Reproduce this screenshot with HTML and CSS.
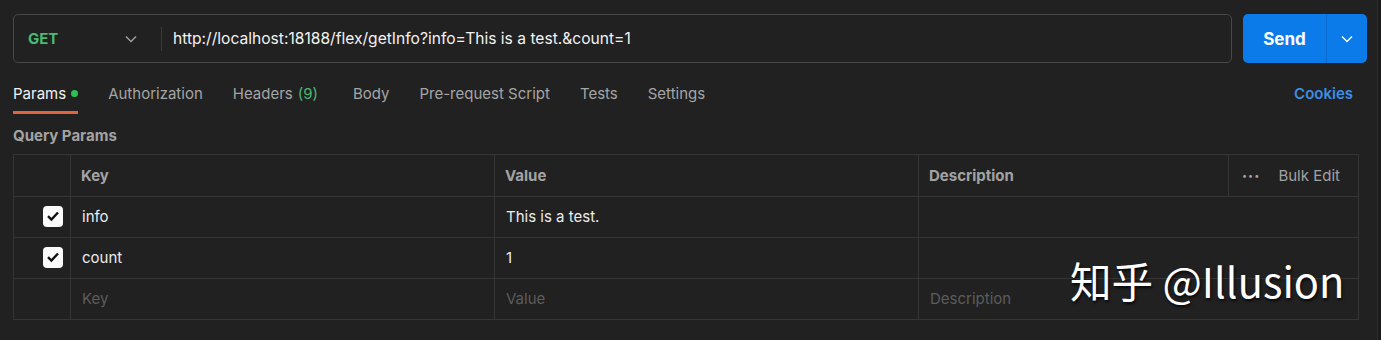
FILE: index.html
```html
<!DOCTYPE html>
<html lang="en">
  <head>
    <meta charset="UTF-8" />
    <meta name="viewport" content="width=device-width, initial-scale=1.0" />
    <title>Params</title>
    <link rel="stylesheet" href="styles.css">
  </head>
  <body>
    <div class="app">
      <!-- Request bar -->
      <div class="request-bar">
        <div class="url-box">
          <div class="method">
            <span class="method-name">GET</span>
            <svg class="chevron" width="12" height="8" viewBox="0 0 12 8">
              <path d="M1 1.5l5 5 5-5" fill="none" stroke="#a0a0a0" stroke-width="1.4" />
            </svg>
          </div>
          <span class="url">http://localhost:18188/flex/getInfo?info=This is a test.&amp;count=1</span>
        </div>
        <div class="send">
          <span class="send-label">Send</span>
          <span class="send-more">
            <svg width="12" height="8" viewBox="0 0 12 8">
              <path d="M1 1.5l5 5 5-5" fill="none" stroke="#fff" stroke-width="1.4" />
            </svg>
          </span>
        </div>
      </div>

      <!-- Tabs -->
      <div class="tabs">
        <ul class="tab-list">
          <li class="tab active">Params <span class="dot"></span></li>
          <li class="tab">Authorization</li>
          <li class="tab">Headers <span class="count">(9)</span></li>
          <li class="tab">Body</li>
          <li class="tab">Pre-request Script</li>
          <li class="tab">Tests</li>
          <li class="tab">Settings</li>
        </ul>
        <span class="cookies">Cookies</span>
      </div>

      <div class="section-title">Query Params</div>

      <table class="params">
        <colgroup>
          <col class="c-check" />
          <col class="c-key" />
          <col class="c-value" />
          <col class="c-desc" />
          <col class="c-bulk" />
        </colgroup>
        <thead>
          <tr>
            <th></th>
            <th>Key</th>
            <th>Value</th>
            <th>Description</th>
            <th class="bulk">
              <span class="more">&bull;&bull;&bull;</span>
              <span>Bulk Edit</span>
            </th>
          </tr>
        </thead>
        <tbody>
          <tr>
            <td class="check-cell"><span class="checkbox"><svg width="14" height="12" viewBox="0 0 14 12"><path d="M2 6.2l3.4 3.3L12 2.5" fill="none" stroke="#111" stroke-width="2.4" /></svg></span></td>
            <td>info</td>
            <td>This is a test.</td>
            <td colspan="2"></td>
          </tr>
          <tr>
            <td class="check-cell"><span class="checkbox"><svg width="14" height="12" viewBox="0 0 14 12"><path d="M2 6.2l3.4 3.3L12 2.5" fill="none" stroke="#111" stroke-width="2.4" /></svg></span></td>
            <td>count</td>
            <td>1</td>
            <td colspan="2"></td>
          </tr>
          <tr class="placeholder">
            <td></td>
            <td>Key</td>
            <td>Value</td>
            <td colspan="2">Description</td>
          </tr>
        </tbody>
      </table>

      <div class="watermark">知乎 @Illusion</div>
    </div>
  </body>
</html>
```

FILE: styles.css
```css
/* Resets */
body {
  margin: 0;
  background: #1b1b1b;
  font-family: Inter, "Noto Sans", sans-serif;
  font-size: 15px;
  color: #ececec;
}
ul {
  margin: 0;
  padding-left: 0;
  list-style: none;
}

/* App */
.app {
  position: relative;
  width: 1378px;
  height: 340px;
  box-sizing: border-box;
  padding: 14px 10px 0 13px;
  background: #212121;
  border-right: 1px solid #2c2c2c;
}

/* Request bar */
.request-bar {
  display: flex;
  gap: 11px;
  height: 49px;
}
.url-box {
  flex: 1;
  display: flex;
  align-items: center;
  border: 1px solid #484848;
  border-radius: 5px;
}
.method {
  display: flex;
  align-items: center;
  justify-content: space-between;
  width: 148px;
  height: 24px;
  box-sizing: border-box;
  padding: 0 24px 0 14px;
  border-right: 1px solid #383838;
}
.method-name {
  color: #4cb871;
  font-weight: 700;
  font-size: 15px;
}
.url {
  padding-left: 11px;
  font-size: 15.6px;
  color: #f2f2f2;
}
.send {
  display: flex;
  width: 124px;
  background: #0b7bea;
  border-radius: 5px;
  color: #fff;
}
.send-label {
  flex: 1;
  display: flex;
  align-items: center;
  justify-content: center;
  font-size: 17px;
  font-weight: 700;
  border-right: 1px solid #0a6cd0;
}
.send-more {
  width: 40px;
  display: flex;
  align-items: center;
  justify-content: center;
}

/* Tabs */
.tabs {
  display: flex;
  justify-content: space-between;
  align-items: flex-start;
  height: 51px;
}
.tab-list {
  display: flex;
  gap: 30px;
}
.tab {
  display: flex;
  align-items: center;
  gap: 5px;
  height: 49px;
  box-sizing: border-box;
  padding-top: 12px;
  color: #a5a5a5;
}
.tab.active {
  color: #f2f2f2;
  border-bottom: 3px solid #e0653c;
  height: 51px;
  padding-top: 13px;
}
.dot {
  width: 7px;
  height: 7px;
  border-radius: 50%;
  background: #2ac251;
}
.count {
  color: #4cb871;
  margin-right: 5px;
}
.cookies {
  margin: 21px 14px 0 0;
  color: #3b8fe6;
  font-weight: 600;
}

/* Section */
.section-title {
  padding: 12px 0 9px;
  color: #a3a3a3;
  font-weight: 700;
}

/* Params table */
.params {
  border-collapse: collapse;
  width: 1345px;
  table-layout: fixed;
}
.c-check { width: 57px; }
.c-key { width: 424px; }
.c-value { width: 424px; }
.c-desc { width: 310px; }
.c-bulk { width: 130px; }
.params th,
.params td {
  border: 1px solid #353535;
  height: 40px;
  padding: 0 11px;
  text-align: left;
}
.params td {
  height: 38px;
  padding-bottom: 2px;
}
.params th {
  height: 41px;
  padding: 0 10px;
  color: #a3a3a3;
  font-weight: 700;
}
.params th.bulk {
  font-weight: 400;
  padding: 0 0 0 13px;
}
.more {
  font-size: 9px;
  letter-spacing: 1px;
  margin-right: 14px;
  vertical-align: 2px;
}
.check-cell {
  text-align: right !important;
  padding-right: 7px !important;
}
.checkbox {
  display: inline-flex;
  align-items: center;
  justify-content: center;
  width: 20px;
  height: 21px;
  border-radius: 4px;
  background: #fbfbfb;
  vertical-align: middle;
}
.placeholder td {
  color: #5c5c5c;
}

/* Watermark */
.watermark {
  position: absolute;
  left: 1070px;
  top: 250px;
  font-family: "Noto Sans CJK SC", "Noto Sans", sans-serif;
  font-size: 41.6px;
  color: #fff;
  text-shadow: 1px 2px 3px rgba(0, 0, 0, 0.8);
  white-space: nowrap;
}
```
